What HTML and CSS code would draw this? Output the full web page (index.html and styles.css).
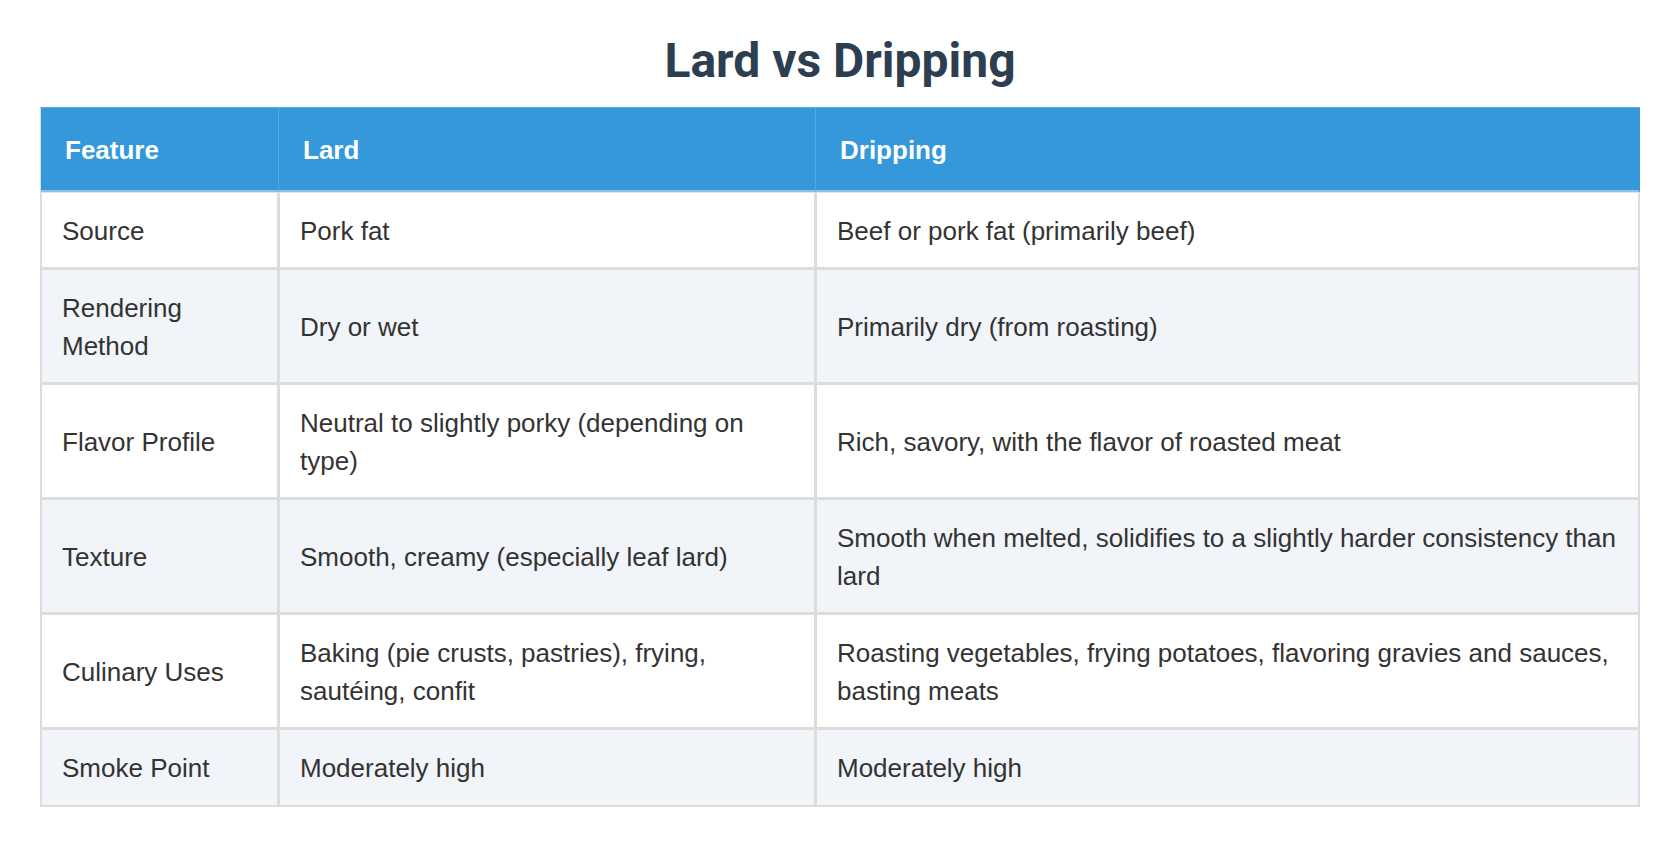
FILE: index.html
```html
<!DOCTYPE html>
<html lang="en">
<head>
<meta charset="utf-8">
<title>Lard vs Dripping</title>
<link rel="stylesheet" href="styles.css">
</head>
<body>
<main class="page">
  <h1 class="title">Lard vs Dripping</h1>
  <table class="compare">
    <colgroup>
      <col class="c-feature">
      <col class="c-lard">
      <col class="c-dripping">
    </colgroup>
    <thead>
      <tr>
        <th>Feature</th>
        <th>Lard</th>
        <th>Dripping</th>
      </tr>
    </thead>
    <tbody>
      <tr>
        <td>Source</td>
        <td>Pork fat</td>
        <td>Beef or pork fat (primarily beef)</td>
      </tr>
      <tr>
        <td>Rendering Method</td>
        <td>Dry or wet</td>
        <td>Primarily dry (from roasting)</td>
      </tr>
      <tr>
        <td>Flavor Profile</td>
        <td>Neutral to slightly porky (depending on type)</td>
        <td>Rich, savory, with the flavor of roasted meat</td>
      </tr>
      <tr>
        <td>Texture</td>
        <td>Smooth, creamy (especially leaf lard)</td>
        <td>Smooth when melted, solidifies to a slightly harder consistency than lard</td>
      </tr>
      <tr>
        <td>Culinary Uses</td>
        <td>Baking (pie crusts, pastries), frying, sautéing, confit</td>
        <td>Roasting vegetables, frying potatoes, flavoring gravies and sauces, basting meats</td>
      </tr>
      <tr>
        <td>Smoke Point</td>
        <td>Moderately high</td>
        <td>Moderately high</td>
      </tr>
    </tbody>
  </table>
</main>
</body>
</html>
```

FILE: styles.css
```css
html, body {
  margin: 0;
  padding: 0;
  background: #ffffff;
}

body {
  font-family: "Liberation Sans", Arial, sans-serif;
  color: #333333;
}

.page {
  padding: 33px 40px 40px;
}

.title {
  margin: 0 0 18px;
  font-family: Roboto, "Liberation Sans", sans-serif;
  font-weight: 700;
  font-size: 48px;
  line-height: 56px;
  color: #2c3e50;
  text-align: center;
}

.compare {
  width: 100%;
  table-layout: fixed;
  border-collapse: separate;
  border-spacing: 0;
  border-left: 1px solid #dcdcdc;
  border-top: 1px solid #5aaee3;
  font-size: 26px;
  line-height: 37.5px;
}

.c-feature { width: 238px; }
.c-lard { width: 537px; }

.compare th {
  background: #3498db;
  color: #ffffff;
  font-weight: 700;
  text-align: left;
  padding: 23.5px 21px 20.5px 24px;
  border-right: 1px solid #52aae2;
  border-bottom: 2px solid #8cc3ea;
  vertical-align: middle;
}

.compare th:last-child {
  border-right: 2px solid #3498db;
}

.compare td {
  padding: 20px 18px 17px 20px;
  border-left: 1px solid #dcdcdc;
  border-top: 1px solid #dcdcdc;
  border-right: 2px solid #dcdcdc;
  border-bottom: 2px solid #dcdcdc;
  vertical-align: middle;
}

.compare tbody tr:first-child td {
  border-top-color: #e2e2e2;
}

.compare tbody tr:nth-child(even) td {
  background: #f1f4f9;
}
```
